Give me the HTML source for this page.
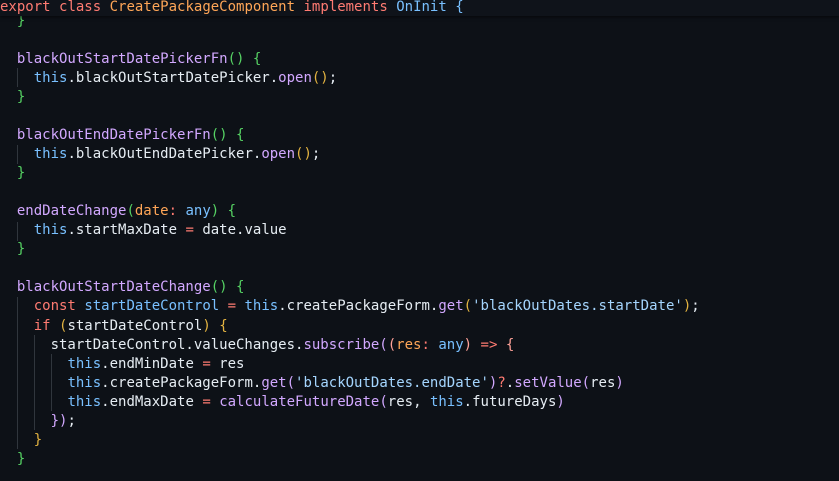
<!DOCTYPE html>
<html><head><meta charset="utf-8"><style>
html,body{margin:0;padding:0;background:#0d1117;width:839px;height:481px;overflow:hidden}
.code{position:absolute;left:0;top:-7.3px;margin:0;font-family:"DejaVu Sans Mono","Liberation Mono",monospace;font-size:14px;line-height:19.05px;color:#e6edf3;white-space:pre}
.hdr{position:absolute;left:0;top:0;width:839px;height:16px;background:#0f131a;box-shadow:0 1px 3px rgba(0,0,0,.6);overflow:hidden}
.hdr pre{margin:0;position:absolute;top:-2.5px;left:0;font-family:"DejaVu Sans Mono","Liberation Mono",monospace;font-size:14px;line-height:19px;color:#e6edf3;white-space:pre}
.k{color:#ff7b72}.c{color:#ffa657}.b{color:#79c0ff}.f{color:#d2a8ff}.s{color:#a5d6ff}
.g{color:#56d364}.y{color:#e3b341}.p{color:#d2a8ff}.o{color:#ffa198}
.guide{position:absolute;width:1px;background:#30363d}
</style></head><body>
<div class="guide" style="left:17px;top:68px;height:19px"></div>
<div class="guide" style="left:17px;top:145px;height:19px"></div>
<div class="guide" style="left:17px;top:222px;height:19px"></div>
<div class="guide" style="left:17px;top:297px;height:152px"></div>
<div class="guide" style="left:34px;top:335px;height:95px"></div>
<div class="guide" style="left:51px;top:354px;height:57px"></div>
<pre class="code">

  <span class="g">}</span>

  <span class="f">blackOutStartDatePickerFn</span><span class="g">()</span> <span class="g">{</span>
    <span class="b">this</span>.blackOutStartDatePicker.<span class="f">open</span><span class="y">()</span>;
  <span class="g">}</span>

  <span class="f">blackOutEndDatePickerFn</span><span class="g">()</span> <span class="g">{</span>
    <span class="b">this</span>.blackOutEndDatePicker.<span class="f">open</span><span class="y">()</span>;
  <span class="g">}</span>

  <span class="f">endDateChange</span><span class="g">(</span><span class="c">date</span><span class="k">:</span> <span class="b">any</span><span class="g">)</span> <span class="g">{</span>
    <span class="b">this</span>.startMaxDate <span class="k">=</span> date.value
  <span class="g">}</span>

  <span class="f">blackOutStartDateChange</span><span class="g">()</span> <span class="g">{</span>
    <span class="k">const</span> <span class="b">startDateControl</span> <span class="k">=</span> <span class="b">this</span>.createPackageForm.<span class="f">get</span><span class="y">(</span><span class="s">'blackOutDates.startDate'</span><span class="y">)</span>;
    <span class="k">if</span> <span class="y">(</span>startDateControl<span class="y">)</span> <span class="y">{</span>
      startDateControl.valueChanges.<span class="f">subscribe</span><span class="p">(</span><span class="o">(</span><span class="c">res</span><span class="k">:</span> <span class="b">any</span><span class="o">)</span> <span class="k">=&gt;</span> <span class="o">{</span>
        <span class="b">this</span>.endMinDate <span class="k">=</span> res
        <span class="b">this</span>.createPackageForm.<span class="f">get</span><span class="p">(</span><span class="s">'blackOutDates.endDate'</span><span class="p">)</span><span class="k">?</span>.<span class="f">setValue</span><span class="p">(</span>res<span class="p">)</span>
        <span class="b">this</span>.endMaxDate <span class="k">=</span> <span class="f">calculateFutureDate</span><span class="p">(</span>res, <span class="b">this</span>.futureDays<span class="p">)</span>
      <span class="p">})</span>;
    <span class="y">}</span>
  <span class="g">}</span>
</pre>
<div class="hdr"><pre><span class="k">export</span> <span class="k">class</span> <span class="c">CreatePackageComponent</span> <span class="k">implements</span> <span class="b">OnInit</span> <span class="b">{</span></pre></div>
</body></html>
